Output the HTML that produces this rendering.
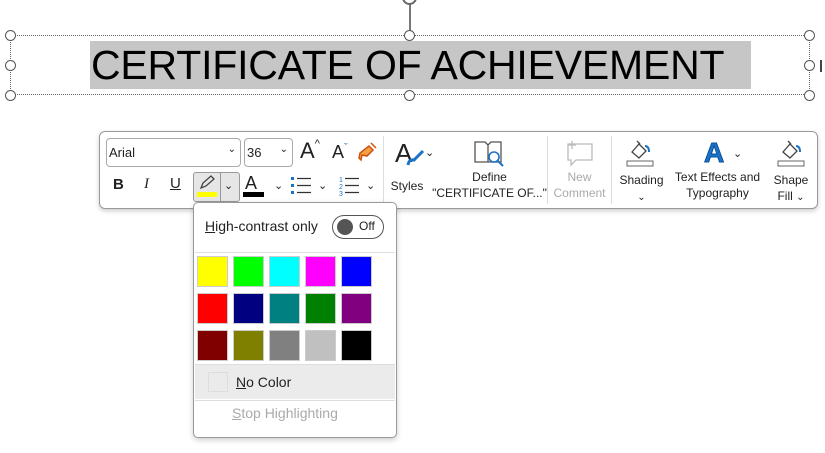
<!DOCTYPE html>
<html><head><meta charset="utf-8"><style>
*{box-sizing:border-box;margin:0;padding:0}
body{width:825px;height:453px;background:#fff;position:relative;overflow:hidden;font-family:"Segoe UI","Liberation Sans",sans-serif;color:#222}
.a{position:absolute}
.h{position:absolute;width:11px;height:11px;border:1.5px solid #555;border-radius:50%;background:#fff}
.t{font-size:12px;color:#222;text-align:center;line-height:16px}
.sw{position:absolute;width:31px;height:31px;border:1px solid #ccc}
</style></head><body>
<div class="a" style="left:409px;top:0;width:1.5px;height:36px;background:#777"></div>
<div class="a" style="left:402px;top:-10px;width:15px;height:15px;border:2px solid #666;border-radius:50%;background:#fff"></div>
<div class="a" style="left:10px;top:35px;width:800px;height:60px;border:1px dotted #666"></div>
<div class="a" style="left:90px;top:41px;width:661px;height:48px;background:#c6c6c6"></div>
<div class="a" style="left:91px;top:39px;font-family:'Liberation Sans',Arial,sans-serif;font-size:41px;line-height:52px;color:#000;letter-spacing:-0.2px">CERTIFICATE OF ACHIEVEMENT</div>
<div class="h" style="left:5px;top:30px"></div><div class="h" style="left:404px;top:30px"></div><div class="h" style="left:804px;top:30px"></div>
<div class="h" style="left:5px;top:60px"></div><div class="h" style="left:804px;top:60px"></div>
<div class="h" style="left:5px;top:90px"></div><div class="h" style="left:404px;top:90px"></div><div class="h" style="left:804px;top:90px"></div>
<div class="a" style="left:820px;top:60px;width:2px;height:12px;background:#444"></div>

<div class="a" style="left:99px;top:131px;width:719px;height:78px;border:1px solid #999;border-radius:6px;background:#fff;box-shadow:0 2px 5px rgba(0,0,0,.2)"></div>
<div class="a" style="left:106px;top:138px;width:135px;height:29px;border:1px solid #aaa;border-radius:4px;font-size:13px;padding:6px 2px">Arial<span style="position:absolute;right:4px;top:5px;font-size:10px">⌄</span></div>
<div class="a" style="left:244px;top:138px;width:49px;height:29px;border:1px solid #aaa;border-radius:4px;font-size:13px;padding:6px 2px">36<span style="position:absolute;right:4px;top:5px;font-size:10px">⌄</span></div>
<div class="a" style="left:300px;top:138px;font-size:22px;font-family:'Liberation Sans',sans-serif">A<span style="font-size:11px;vertical-align:top">^</span></div>
<div class="a" style="left:332px;top:142px;font-size:18px;font-family:'Liberation Sans',sans-serif">A<span style="font-size:11px;vertical-align:top;color:#1a73c7">ˇ</span></div>
<svg class="a" style="left:357px;top:140px" width="22" height="22"><path d="M14 3 L19 8 M12 6 L16 10 L10 16 L5 15 L4 20 L2 18 L3 13 Z" fill="#f5a040" stroke="#d05010" stroke-width="1.5"/></svg>
<div class="a" style="left:113px;top:176px;font-weight:bold;font-size:15px">B</div>
<div class="a" style="left:144px;top:176px;font-style:italic;font-size:15px;font-family:'Liberation Serif',serif">I</div>
<div class="a" style="left:170px;top:175px;text-decoration:underline;font-size:15px">U</div>
<div class="a" style="left:193px;top:172px;width:47px;height:30px;border:1px solid #999;border-radius:3px;background:#e6e6e6"></div>
<div class="a" style="left:220px;top:172px;width:1px;height:30px;background:#999"></div>
<svg class="a" style="left:198px;top:174px" width="20" height="18"><path d="M3 14 L5 9 L13 2 L16 5 L8 12 Z" fill="none" stroke="#444" stroke-width="1.3"/></svg>
<div class="a" style="left:197px;top:192px;width:20px;height:5px;background:#ffff00"></div>
<div class="a" style="left:224px;top:179px;font-size:11px">⌄</div>
<div class="a" style="left:245px;top:173px;font-size:18px;font-family:'Liberation Sans',sans-serif">A</div>
<div class="a" style="left:243px;top:192px;width:21px;height:5px;background:#000"></div>
<div class="a" style="left:274px;top:179px;font-size:11px">⌄</div>
<svg class="a" style="left:290px;top:175px" width="24" height="22"><g fill="#1a73c7"><rect x="1" y="2" width="3" height="3"/><rect x="1" y="9" width="3" height="3"/><rect x="1" y="16" width="3" height="3"/></g><g stroke="#333" stroke-width="1.3"><path d="M7 3.5H21M7 10.5H21M7 17.5H21"/></g></svg>
<div class="a" style="left:318px;top:179px;font-size:11px">⌄</div>
<svg class="a" style="left:338px;top:175px" width="24" height="22"><g fill="#1a73c7" font-size="7" font-family="Liberation Sans"><text x="1" y="7">1</text><text x="1" y="14">2</text><text x="1" y="21">3</text></g><g stroke="#333" stroke-width="1.3"><path d="M7 3.5H21M7 10.5H21M7 17.5H21"/></g></svg>
<div class="a" style="left:366px;top:179px;font-size:11px">⌄</div>
<div class="a" style="left:383px;top:136px;width:1px;height:68px;background:#ddd"></div>
<div class="a" style="left:395px;top:138px;font-size:26px;font-family:'Liberation Sans',sans-serif;font-weight:300">A</div>
<svg class="a" style="left:405px;top:148px" width="22" height="20"><path d="M3 17 Q4 11 9 12 L18 3" fill="none" stroke="#1a73c7" stroke-width="3"/></svg>
<div class="a" style="left:425px;top:146px;font-size:11px">⌄</div>
<div class="a t" style="left:388px;top:178px;width:38px">Styles</div>
<svg class="a" style="left:473px;top:140px" width="34" height="30"><path d="M2 2 H12 L15 5 L18 2 H28 V22 H2 Z M15 5 V22" fill="none" stroke="#555" stroke-width="1.3"/><circle cx="21" cy="17" r="5" fill="#fff" stroke="#1a73c7" stroke-width="1.6"/><path d="M25 21 L30 26" stroke="#1a73c7" stroke-width="2"/></svg>
<div class="a t" style="left:432px;top:169px;width:115px">Define<br>"CERTIFICATE OF..."</div>
<div class="a" style="left:547px;top:136px;width:1px;height:68px;background:#ddd"></div>
<svg class="a" style="left:562px;top:140px" width="34" height="28"><path d="M6 4 H30 V20 H14 L9 25 V20 H6 Z" fill="none" stroke="#bbb" stroke-width="1.3"/><path d="M10 1 V9 M6 5 H14" stroke="#bbb" stroke-width="1.3"/></svg>
<div class="a t" style="left:552px;top:169px;width:55px;color:#aaa">New<br>Comment</div>
<div class="a" style="left:611px;top:136px;width:1px;height:68px;background:#ddd"></div>
<svg class="a" style="left:624px;top:138px" width="32" height="32"><path d="M8 14 L15 6 L22 13 L15 20 Z M13 3 L16 6" fill="none" stroke="#444" stroke-width="1.3"/><path d="M21 8 Q25 8 25 14" fill="none" stroke="#1a73c7" stroke-width="2"/><rect x="3" y="23" width="26" height="5" fill="none" stroke="#666"/></svg>
<div class="a t" style="left:614px;top:172px;width:55px">Shading<br><span style="font-size:10px">⌄</span></div>
<div class="a" style="left:704px;top:137px;font-size:28px;font-family:'Liberation Sans',sans-serif;font-weight:bold;color:#1a73c7;-webkit-text-stroke:1px #0d4f9a">A</div>
<div class="a" style="left:733px;top:147px;font-size:11px">⌄</div>
<div class="a t" style="left:670px;top:169px;width:95px">Text Effects and<br>Typography</div>
<svg class="a" style="left:775px;top:138px" width="32" height="32"><path d="M8 14 L15 6 L22 13 L15 20 Z M13 3 L16 6" fill="none" stroke="#444" stroke-width="1.3"/><path d="M21 8 Q25 8 25 14" fill="none" stroke="#1a73c7" stroke-width="2"/><rect x="3" y="23" width="26" height="5" fill="none" stroke="#666"/></svg>
<div class="a t" style="left:768px;top:172px;width:46px">Shape<br>Fill <span style="font-size:10px">⌄</span></div>

<div class="a" style="left:193px;top:202px;width:204px;height:236px;border:1px solid #999;border-radius:5px;background:#fff;box-shadow:0 2px 6px rgba(0,0,0,.2)"></div>
<div class="a" style="left:205px;top:218px;font-size:14px"><u>H</u>igh-contrast only</div>
<div class="a" style="left:332px;top:215px;width:52px;height:24px;border:1px solid #555;border-radius:12px"></div>
<div class="a" style="left:337px;top:219px;width:16px;height:16px;border-radius:50%;background:#555"></div>
<div class="a" style="left:359px;top:219px;font-size:12px">Off</div>
<div class="a" style="left:195px;top:252px;width:200px;height:1px;background:#ddd"></div>
<div class="sw" style="left:197px;top:256px;background:#ffff00"></div>
<div class="sw" style="left:233px;top:256px;background:#00ff00"></div>
<div class="sw" style="left:269px;top:256px;background:#00ffff"></div>
<div class="sw" style="left:305px;top:256px;background:#ff00ff"></div>
<div class="sw" style="left:341px;top:256px;background:#0000ff"></div>
<div class="sw" style="left:197px;top:293px;background:#ff0000"></div>
<div class="sw" style="left:233px;top:293px;background:#000080"></div>
<div class="sw" style="left:269px;top:293px;background:#008080"></div>
<div class="sw" style="left:305px;top:293px;background:#008000"></div>
<div class="sw" style="left:341px;top:293px;background:#800080"></div>
<div class="sw" style="left:197px;top:330px;background:#800000"></div>
<div class="sw" style="left:233px;top:330px;background:#808000"></div>
<div class="sw" style="left:269px;top:330px;background:#808080"></div>
<div class="sw" style="left:305px;top:330px;background:#c0c0c0"></div>
<div class="sw" style="left:341px;top:330px;background:#000000"></div>
<div class="a" style="left:195px;top:364px;width:200px;height:1px;background:#ddd"></div>
<div class="a" style="left:195px;top:365px;width:200px;height:34px;background:#ebebeb"></div>
<div class="a" style="left:208px;top:372px;width:20px;height:20px;border:1px solid #ddd"></div>
<div class="a" style="left:236px;top:374px;font-size:14px"><u>N</u>o Color</div>
<div class="a" style="left:195px;top:400px;width:200px;height:1px;background:#ddd"></div>
<div class="a" style="left:232px;top:405px;font-size:14px;color:#aaa"><u>S</u>top Highlighting</div>
</body></html>
